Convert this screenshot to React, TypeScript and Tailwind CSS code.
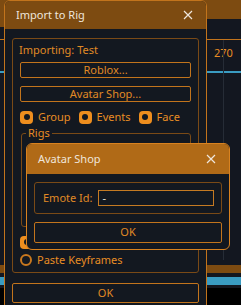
import type { ReactNode } from "react";

const font = "font-['Noto_Sans','DejaVu_Sans',sans-serif]";

function CloseIcon() {
  return (
    <svg width="10" height="10" viewBox="0 0 10 10" className="shrink-0">
      <path d="M1 1L9 9M9 1L1 9" stroke="#efe6dc" strokeWidth="1.2" />
    </svg>
  );
}

function Radio({ checked, label }: { checked?: boolean; label: string }) {
  return (
    <div className="flex h-[14px] items-center gap-[5px]">
      {checked ? (
        <span className="flex h-[13px] w-[13px] items-center justify-center rounded-[4px] bg-[#ee8e1e]">
          <span className="h-[6px] w-[6px] rounded-full bg-[#131820]" />
        </span>
      ) : (
        <span className="h-[12px] w-[12px] rounded-full border-2 border-[#c9781e]" />
      )}
      <span className="whitespace-nowrap text-[11px] leading-[14px] text-[#e88d24]">{label}</span>
    </div>
  );
}

function Button({ children, className = "" }: { children: ReactNode; className?: string }) {
  return (
    <div
      className={`flex items-center justify-center rounded-[2px] border border-[#c2741c] text-[11px] text-[#e08a25] ${className}`}
    >
      {children}
    </div>
  );
}

function TitleBar({ title, className = "" }: { title: string; className?: string }) {
  return (
    <div className={`flex items-center justify-between pl-[11px] pr-[13px] ${className}`}>
      <span className="text-[11px] text-[#efe6dc]">{title}</span>
      <CloseIcon />
    </div>
  );
}

export default function App() {
  return (
    <div className={`relative h-[305px] w-[241px] overflow-hidden bg-[#131720] ${font}`}>
      {/* background panels */}
      <div className="flex h-full flex-col">
        <div className="flex h-[28px] items-start">
          <div className="h-[27px] w-[4px] bg-[#7d4b11]" />
          <div className="h-[19px] flex-1 bg-[#7d4b11]" />
        </div>
        <div className="h-[11px]" />
        <div className="h-px bg-[#c2741c]" />
        <div className="relative h-[31px] pl-[214px] pt-[5px] text-[11px] leading-[16px] text-[#e88d24]">
          270
        </div>
        <div className="h-[2px] bg-[#3a9cc2]" />
        <div className="flex-1" />
        <div className="h-[8px] bg-[#7d4b11]" />
        <div className="h-[4px]" />
        <div className="h-[8px] bg-[#3a9cc2]" />
        <div className="h-[3px]" />
        <div className="h-[17px] bg-black" />
      </div>
      <div className="absolute left-[223px] top-[40px] h-[220px] w-px bg-[#262c36]" />

      {/* Import to Rig */}
      <div className="absolute left-[4px] top-0 flex h-[330px] w-[203px] flex-col overflow-hidden rounded-t-[6px] border border-[#c2741c] bg-[#131820]">
        <TitleBar title="Import to Rig" className="h-[28px] bg-[#7d4b11]" />
        <div className="px-[7px] pt-[9px]">
          <div className="flex h-[235px] flex-col rounded-[3px] border border-[#7a4a16] px-[7px] pt-[3px]">
            <div className="-ml-px h-[16px] text-[11px] leading-[16px] text-[#e08a25]">Importing: Test</div>
            <Button className="mt-[4px] h-[16px]">Roblox...</Button>
            <Button className="mt-[8px] h-[16px]">Avatar Shop...</Button>
            <div className="mt-[8px] flex gap-[8px]">
              <Radio checked label="Group" />
              <Radio checked label="Events" />
              <Radio checked label="Face" />
            </div>
            <fieldset className="relative ml-px mt-px h-[102px] rounded-[3px] border border-[#7a4a16]">
              <legend className="ml-[4px] px-[2px] text-[11px] leading-[16px] text-[#e88d24]">Rigs</legend>
              <div className="absolute right-[9px] top-[14px] h-[5px] w-[3px] rounded-full bg-[#c9781e]" />
            </fieldset>
            <div className="mt-[8px]">
              <Radio checked label="Copy Keyframes" />
            </div>
            <div className="mt-[4px]">
              <Radio label="Paste Keyframes" />
            </div>
          </div>
          <Button className="mt-[10px] h-[20px]">OK</Button>
        </div>
      </div>

      {/* Avatar Shop */}
      <div className="absolute left-[26px] top-[143px] flex h-[107px] w-[204px] flex-col overflow-hidden rounded-[6px] border border-[#d9821f] bg-[#131820]">
        <TitleBar title="Avatar Shop" className="h-[30px] bg-[#b06a17]" />
        <div className="px-[7px] pt-[8px]">
          <div className="flex h-[32px] items-center rounded-[3px] border border-[#7a4a16] pl-[8px] pr-[7px]">
            <span className="whitespace-nowrap text-[11px] text-[#e08a25]">Emote Id:</span>
            <div className="ml-[5px] flex h-[16px] flex-1 items-center border border-[#c57a22] pl-[4px] text-[11px] leading-[14px] text-[#e8e2dc]">
              -
            </div>
          </div>
          <Button className="mt-[8px] h-[21px]">OK</Button>
        </div>
      </div>
    </div>
  );
}
